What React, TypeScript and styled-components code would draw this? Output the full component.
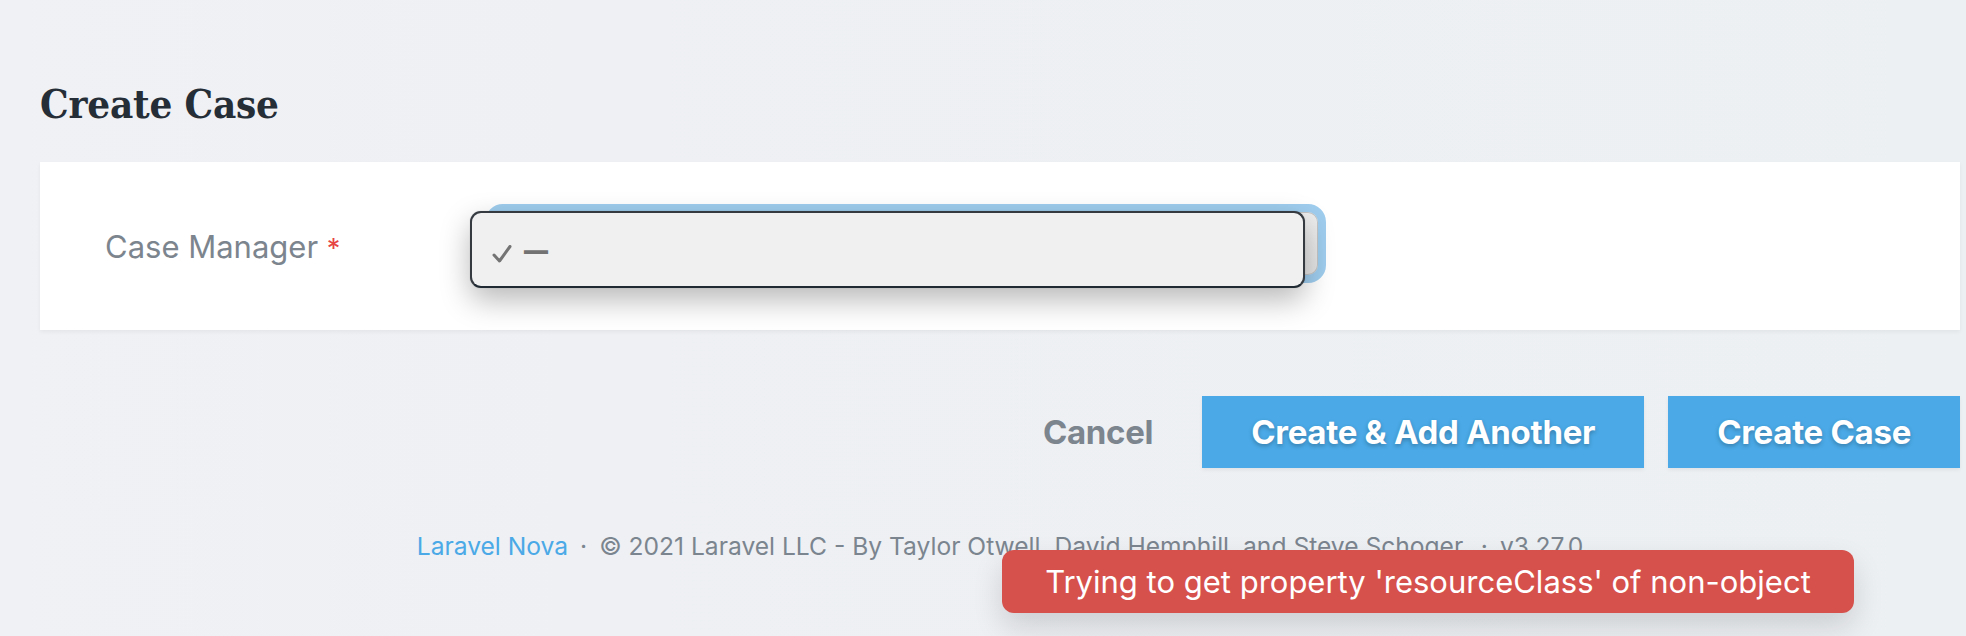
import React from "react";
import styled, { createGlobalStyle } from "styled-components";

const GlobalStyle = createGlobalStyle`
  html, body {
    margin: 0;
    padding: 0;
    background: #eef1f4;
  }
  body {
    font-family: Inter, "Noto Sans", "Liberation Sans", sans-serif;
    -webkit-font-smoothing: antialiased;
  }
`;

function CheckIcon() {
  return (
    <svg width="20" height="18" viewBox="0 0 20 18">
      <polyline
        points="2,10 7.5,16 18,1.5"
        fill="none"
        stroke="#747474"
        strokeWidth="3"
        strokeLinecap="round"
        strokeLinejoin="round"
      />
    </svg>
  );
}

export default function App() {
  return (
    <>
      <GlobalStyle />
      <Page>
        <Title>Create Case</Title>

        <Card>
          <FieldRow>
            <Label>
              Case Manager <Required>*</Required>
            </Label>
            <FieldWrap>
              <SelectBox />
              <Popup>
                <CheckIcon />
                <Dash>—</Dash>
              </Popup>
            </FieldWrap>
          </FieldRow>
        </Card>

        <Actions>
          <CancelLink>Cancel</CancelLink>
          <PrimaryButton>Create &amp; Add Another</PrimaryButton>
          <PrimaryButton>Create Case</PrimaryButton>
        </Actions>

        <Footer>
          <FooterLink>Laravel Nova</FooterLink>
          <Dot>·</Dot>© 2021 Laravel LLC - By Taylor Otwell, David Hemphill, and
          Steve Schoger.
          <Dot>·</Dot>v3.27.0
        </Footer>
      </Page>

      <Toast>Trying to get property 'resourceClass' of non-object</Toast>
    </>
  );
}

const Page = styled.div`
  padding: 81px 6px 0 40px;
  min-height: 636px;
  box-sizing: border-box;
  background: linear-gradient(90deg, #f0f1f4 0%, #eef0f4 30%, #edf0f3 100%);
`;

const Title = styled.h1`
  margin: 0;
  font-family: "DejaVu Serif Condensed", "DejaVu Serif", serif;
  font-weight: 700;
  font-size: 40px;
  line-height: 46px;
  color: #252d37;
  letter-spacing: -0.2px;
`;

const Card = styled.div`
  margin-top: 35px;
  height: 168px;
  background: #fff;
  box-shadow: 0 2px 4px rgba(0, 0, 0, 0.05);
`;

const FieldRow = styled.div`
  height: 100%;
  display: flex;
  align-items: center;
  padding-left: 65px;
`;

const Label = styled.label`
  width: 380px;
  font-size: 31px;
  color: #7c858e;
  line-height: 1;
`;

const Required = styled.span`
  color: #e74444;
  font-size: 27px;
`;

const FieldWrap = styled.div`
  position: relative;
  margin-top: -5px;
`;

const SelectBox = styled.div`
  width: 841px;
  height: 79px;
  box-sizing: border-box;
  border: 8px solid #9fcdee;
  border-radius: 18px;
  background: linear-gradient(180deg, #eeeeee, #e4e4e4);
  box-shadow: inset 0 0 0 1px #c4c4c4;
`;

const Popup = styled.div`
  position: absolute;
  left: -15px;
  top: 7px;
  width: 835px;
  height: 77px;
  box-sizing: border-box;
  display: flex;
  align-items: center;
  gap: 9px;
  padding-left: 20px;
  background: #f0f0f0;
  border: 2px solid #343a40;
  border-bottom-color: #1f2a33;
  border-radius: 11px;
  box-shadow: 0 12px 30px rgba(0, 0, 0, 0.28), 0 0 1px rgba(0, 0, 0, 0.3);
  color: #727272;

  svg {
    margin-top: 8px;
  }
`;

const Dash = styled.span`
  font-family: "DejaVu Sans", sans-serif;
  font-weight: 700;
  font-size: 30px;
  transform: scaleX(0.9);
`;

const Actions = styled.div`
  margin-top: 66px;
  display: flex;
  justify-content: flex-end;
  align-items: center;
  gap: 24px;
`;

const CancelLink = styled.a`
  font-size: 33px;
  font-weight: 700;
  color: #7c848e;
  margin-right: 25px;
  letter-spacing: -0.3px;
`;

const PrimaryButton = styled.button`
  height: 72px;
  padding: 0 49px;
  border: 0;
  border-radius: 0;
  background: #4aa9e6;
  color: #fff;
  font-family: Inter, "Noto Sans", sans-serif;
  font-size: 33px;
  font-weight: 700;
  letter-spacing: -0.3px;
  text-shadow: 0 2px 4px rgba(0, 0, 0, 0.25);
  box-shadow: 0 2px 4px rgba(0, 0, 0, 0.06);
`;

const Footer = styled.p`
  margin: 60px 0 0;
  text-align: center;
  font-size: 24.6px;
  line-height: 36px;
  color: #7b858f;
`;

const FooterLink = styled.a`
  color: #4aa9e6;
`;

const Dot = styled.span`
  padding: 0 12px;
`;

const Toast = styled.div`
  position: absolute;
  left: 1002px;
  top: 550px;
  width: 852px;
  height: 63px;
  box-sizing: border-box;
  display: flex;
  align-items: center;
  justify-content: center;
  border-radius: 12px;
  background: #d6504c;
  color: #fff;
  font-size: 31px;
  box-shadow: 0 14px 30px rgba(0, 0, 0, 0.14);
`;
